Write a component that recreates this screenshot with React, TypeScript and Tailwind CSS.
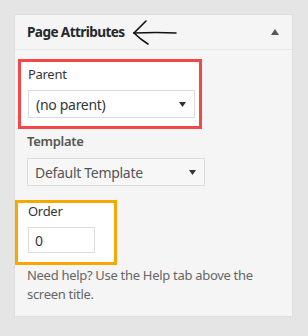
import React from 'react'

const FONT = '"Noto Sans", "Liberation Sans", sans-serif'

function Caret() {
  return (
    <svg width="7" height="5" viewBox="0 0 7 5" className="shrink-0">
      <polygon points="0,0 7,0 3.5,5" fill="#2e3338" />
    </svg>
  )
}

function Select({ value, white, className }: { value: string; white?: boolean; className: string }) {
  return (
    <div
      className={`flex h-[28px] items-center justify-between border border-[#dcdcdc] pl-[7px] pr-[8px] text-[14px] tracking-[-0.3px] ${white ? 'bg-white text-[#32373c]' : 'bg-[#f7f7f7] text-[#555]'} ${className}`}
    >
      <span>{value}</span>
      <Caret />
    </div>
  )
}

export default function App() {
  return (
    <div className="h-[336px] w-[308px] bg-[#e5e5e5] pl-[14px] pt-[14px]" style={{ fontFamily: FONT }}>
      <div className="w-[279px] border border-[#dedede] bg-[#f5f5f5] pb-[12px]">
        {/* header */}
        <div className="relative flex h-[35px] items-center border-b border-[#e6e6e6] pl-[12px] pr-[13px]">
          <span className="text-[13.6px] font-bold tracking-[-0.6px] text-[#23282d]">Page Attributes</span>
          <svg width="48" height="28" viewBox="0 0 48 28" className="absolute left-[116px] top-[4px]">
            <g fill="none" stroke="#111" strokeWidth="1.6" strokeLinecap="round" strokeLinejoin="round">
              <path d="M3 14 C 15 13.5, 30 13.2, 45 14" />
              <path d="M3 14 C 7 10, 11 6, 15 2" />
              <path d="M3 14 C 7 18, 12 22, 17 25" />
            </g>
          </svg>
          <svg width="8" height="6" viewBox="0 0 8 6" className="ml-auto">
            <polygon points="4,0 8,6 0,6" fill="#50575e" />
          </svg>
        </div>

        {/* parent */}
        <div className="ml-[3px] mt-[9px] w-[184px] border-[3px] border-[#f44848] bg-white pb-[8px] pl-[7px] pr-[4px] pt-[4px]">
          <div className="text-[13px] leading-[16px] tracking-[-0.3px] text-[#32373c]">Parent</div>
          <Select value="(no parent)" white className="mt-[8px]" />
        </div>

        {/* template */}
        <div className="ml-[12px] mt-[4px] text-[13px] font-semibold leading-[16px] tracking-[-0.3px] text-[#555]">Template</div>
        <Select value="Default Template" className="ml-[12px] mt-[9px] w-[178px]" />

        {/* order */}
        <div className="mt-[14px] w-[102px] border-[3px] border-[#f6a800] bg-white pb-[9px] pl-[10px] pt-0">
          <div className="text-[13px] leading-[16px] tracking-[-0.3px] text-[#32373c]">Order</div>
          <div className="mt-[8px] flex h-[26px] w-[67px] items-center border border-[#dcdcdc] bg-white pl-[6px] text-[14px] text-[#32373c]">
            0
          </div>
        </div>

        <p className="ml-[12px] mt-[1px] w-[250px] text-[13px] leading-[19px] tracking-[-0.3px] text-[#666]">
          Need help? Use the Help tab above the screen title.
        </p>
      </div>
    </div>
  )
}
